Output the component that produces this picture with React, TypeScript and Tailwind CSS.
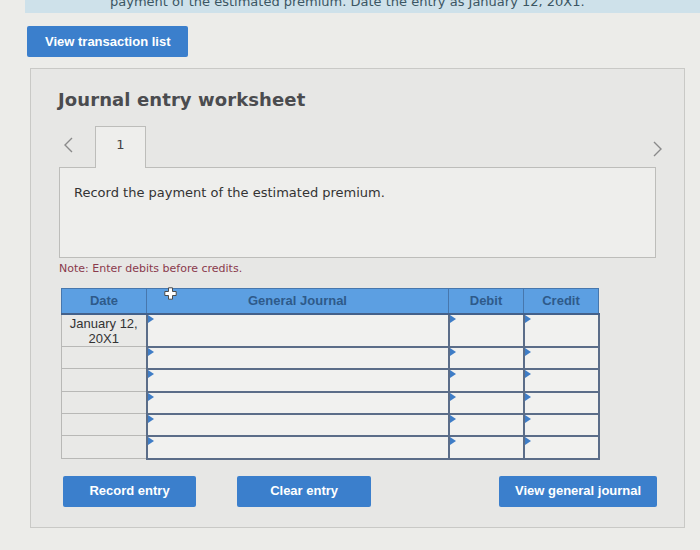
import React from "react";

const Tri = () => (
  <svg className="absolute left-0 top-0" width="6" height="8" viewBox="0 0 6 8">
    <polygon points="0,0 6,4 0,8" fill="#3f7dc6" />
  </svg>
);

const rows = [33, 22, 23, 22, 22, 23];

export default function App() {
  return (
    <div className="w-[700px] h-[550px] overflow-hidden bg-[#ecece9]" style={{ fontFamily: '"Liberation Sans", Arial, sans-serif' }}>
      {/* banner */}
      <div className="ml-[25px] h-[13px] bg-[#cee1ea] overflow-hidden">
        <div
          className="mt-[-6px] pl-[85px] whitespace-nowrap text-[13px] leading-[15px] text-[#3b5663]"
          style={{ fontFamily: '"DejaVu Sans", Verdana, sans-serif' }}
        >
          payment of the estimated premium. Date the entry as January 12, 20X1.
        </div>
      </div>

      <button className="ml-[27px] mt-[13px] w-[161px] h-[31px] bg-[#3b7fcc] rounded-[2px] text-white font-bold text-[13px] flex items-center pl-[18px]">
        View transaction list
      </button>

      {/* panel */}
      <div className="ml-[30px] mt-[11px] w-[655px] h-[460px] border border-[#c9c9c6] bg-[#e7e7e5] px-[27px] pt-[20px]">
        <div
          className="text-[18px] leading-[22px] font-bold text-[#4b4c4f] tracking-[0.1px]"
          style={{ fontFamily: '"DejaVu Sans", Verdana, sans-serif' }}
        >
          Journal entry worksheet
        </div>

        {/* tabs */}
        <div className="mt-[15px] flex items-end h-[41px] relative">
          <svg className="absolute left-[5px] top-[11px]" width="10" height="16" viewBox="0 0 10 16">
            <polyline points="9,1 2,8 9,15" fill="none" stroke="#8a8a8a" strokeWidth="1.4" />
          </svg>
          <div className="ml-[37px] w-[51px] h-[42px] mb-[-1px] relative z-10 border border-b-0 border-[#bdbdba] bg-[#eeeeec] flex justify-center pt-[10px]">
            <span className="text-[13px] leading-[16px] text-[#444]" style={{ fontFamily: '"DejaVu Sans", Verdana, sans-serif' }}>1</span>
          </div>
          <svg className="absolute right-[-6px] top-[15px]" width="10" height="16" viewBox="0 0 10 16">
            <polyline points="1,1 8,8 1,15" fill="none" stroke="#8a8a8a" strokeWidth="1.4" />
          </svg>
        </div>

        <div className="ml-[1px] w-[597px] h-[91px] border border-[#bdbdba] bg-[#eeeeec] pl-[14px] pt-[16px]">
          <div className="text-[13px] leading-[18px] text-[#333]" style={{ fontFamily: '"DejaVu Sans", Verdana, sans-serif' }}>
            Record the payment of the estimated premium.
          </div>
        </div>

        <div className="ml-[1px] mt-[4px] text-[11px] leading-[14px] text-[#8a3a4c]" style={{ fontFamily: '"DejaVu Sans", Verdana, sans-serif' }}>
          Note: Enter debits before credits.
        </div>

        {/* table */}
        <table className="ml-[3px] mt-[12px] border-collapse table-fixed w-[537px]">
          <colgroup>
            <col className="w-[85px]" />
            <col className="w-[302px]" />
            <col className="w-[75px]" />
            <col className="w-[75px]" />
          </colgroup>
          <thead>
            <tr className="h-[25px] bg-[#5c9fe2]">
              <th className="border border-[#4777ad] border-b-2 border-b-[#44618a] text-[13px] font-bold text-[#2e5a8a] text-center p-0">Date</th>
              <th className="border border-[#4777ad] border-b-2 border-b-[#44618a] text-[13px] font-bold text-[#2e5a8a] text-center p-0 relative">
                <svg className="absolute left-[17px] top-[-2px]" width="13" height="13" viewBox="0 0 13 13">
                  <path d="M4.5 0.8 H8.5 V4.5 H12.2 V8.5 H8.5 V12.2 H4.5 V8.5 H0.8 V4.5 H4.5 Z" fill="#ffffff" stroke="#4b4b4b" strokeWidth="1" />
                </svg>
                General Journal
              </th>
              <th className="border border-[#4777ad] border-b-2 border-b-[#44618a] text-[13px] font-bold text-[#2e5a8a] text-center p-0">Debit</th>
              <th className="border border-[#4777ad] border-b-2 border-b-[#44618a] text-[13px] font-bold text-[#2e5a8a] text-center p-0">Credit</th>
            </tr>
          </thead>
          <tbody>
            {rows.map((h, i) => (
              <tr key={i} style={{ height: h }}>
                <td className="border border-[#b8b8b6] bg-[#e9e9e7] text-center align-top p-0 pt-[1px] text-[13px] leading-[15px] text-[#333]">
                  {i === 0 ? (
                    <>
                      January 12,
                      <br />
                      20X1
                    </>
                  ) : null}
                </td>
                <td className="border-2 border-[#5b6d88] bg-[#f1f1ef] p-0 relative"><Tri /></td>
                <td className="border-2 border-[#5b6d88] bg-[#f1f1ef] p-0 relative"><Tri /></td>
                <td className="border-2 border-[#5b6d88] bg-[#f1f1ef] p-0 relative"><Tri /></td>
              </tr>
            ))}
          </tbody>
        </table>

        {/* buttons */}
        <div className="mt-[16px] flex items-center">
          <button className="ml-[5px] w-[134px] h-[31px] bg-[#3b7fcc] rounded-[2px] text-white font-bold text-[13px]">
            Record entry
          </button>
          <button className="ml-[41px] w-[135px] h-[31px] bg-[#3b7fcc] rounded-[2px] text-white font-bold text-[13px]">
            Clear entry
          </button>
          <button className="ml-[128px] w-[159px] h-[31px] bg-[#3b7fcc] rounded-[2px] text-white font-bold text-[13px]">
            View general journal
          </button>
        </div>
      </div>
    </div>
  );
}
